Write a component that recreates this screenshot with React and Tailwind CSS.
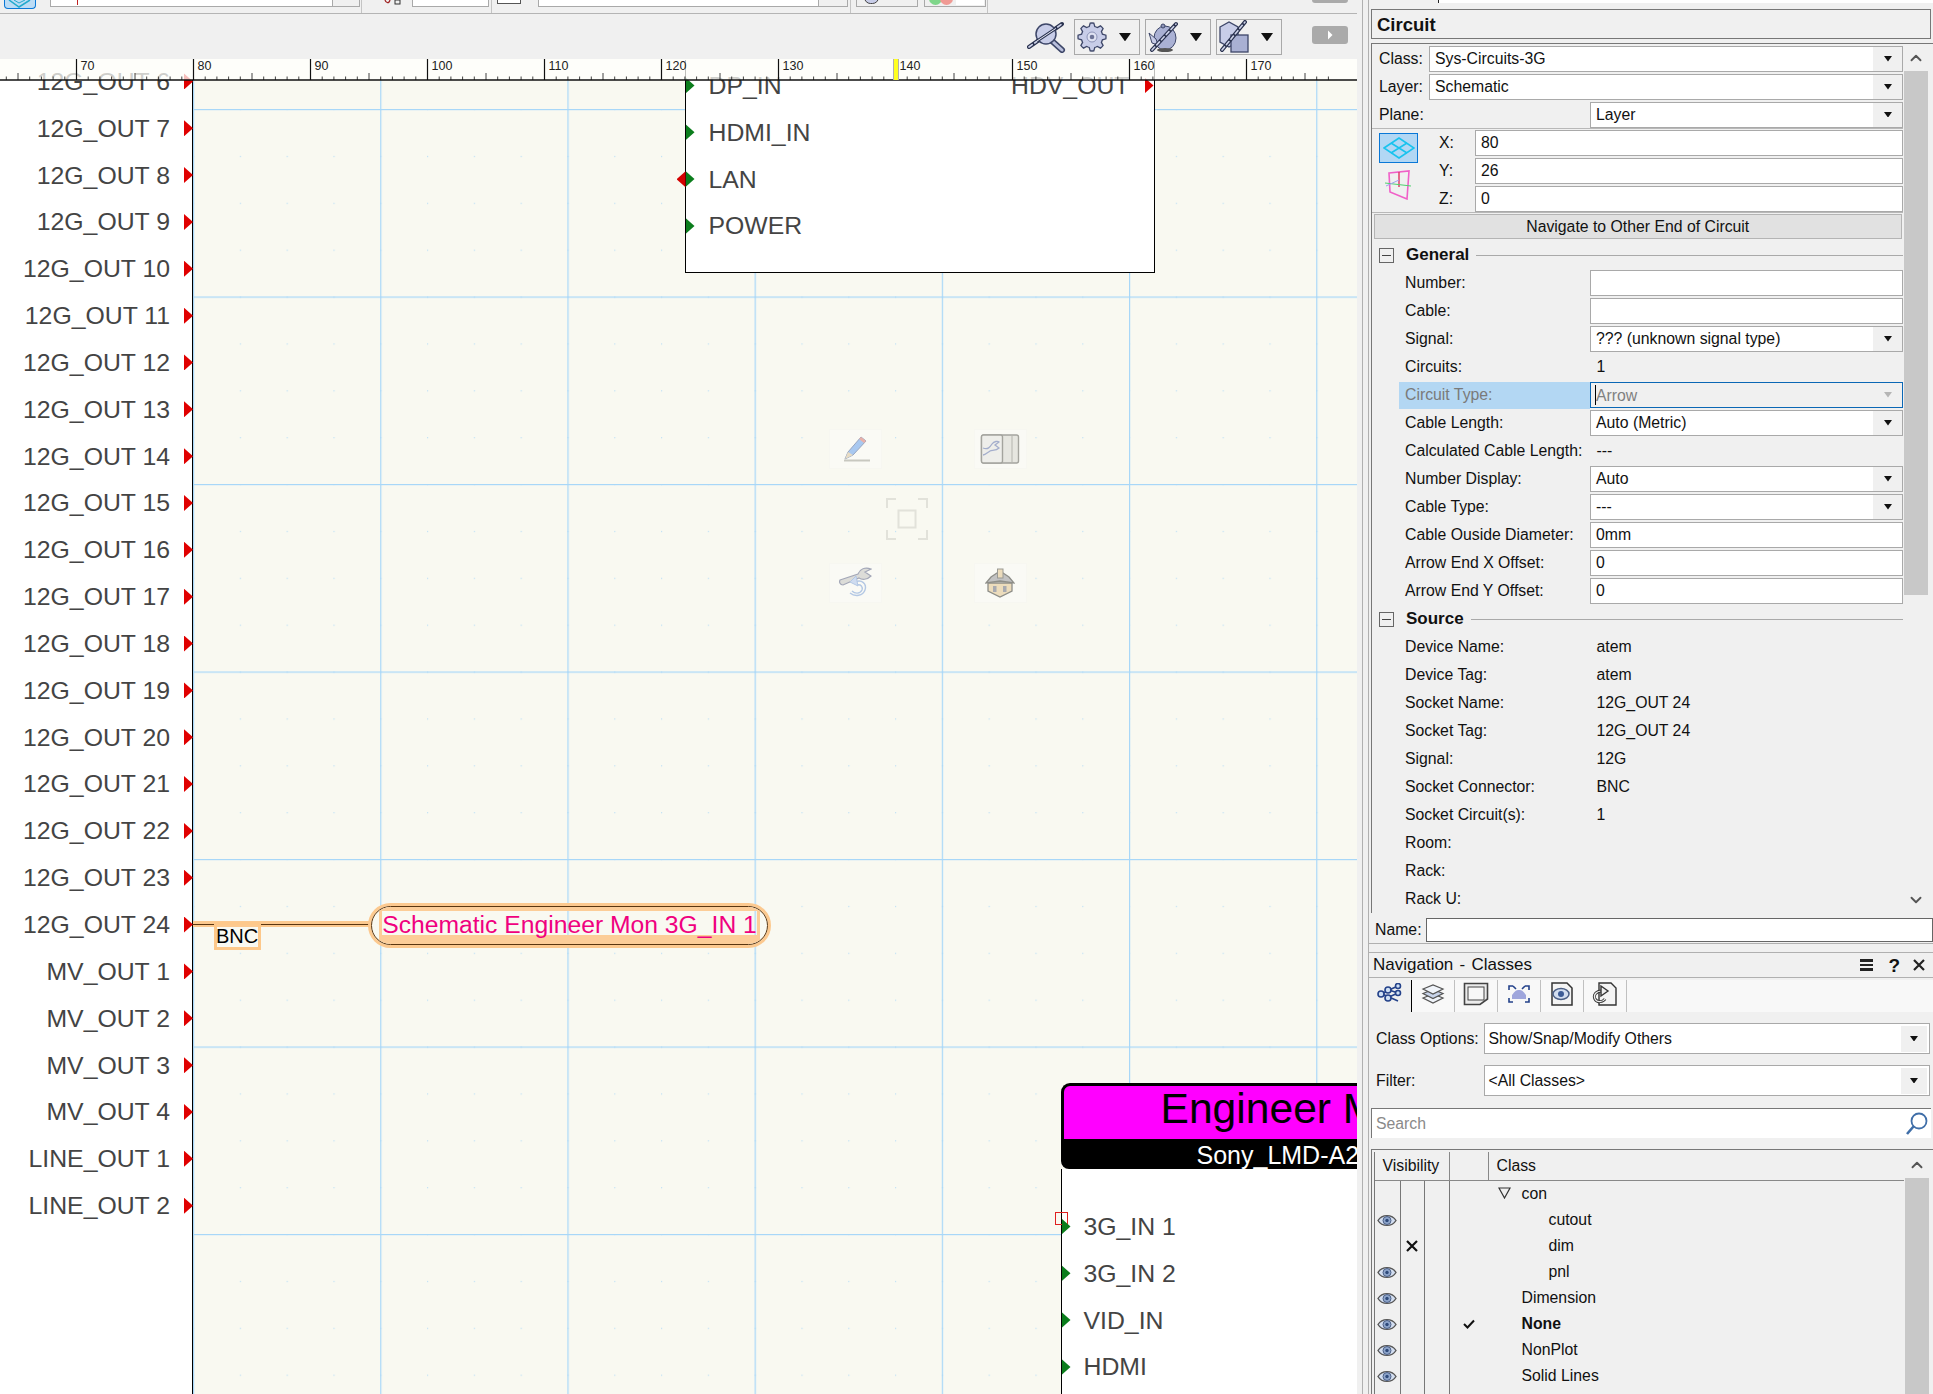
import React from 'react';
import { ChevronUp, ChevronDown } from 'lucide-react';

const OUTPUTS = [
  '12G_OUT 6', '12G_OUT 7', '12G_OUT 8', '12G_OUT 9', '12G_OUT 10', '12G_OUT 11', '12G_OUT 12',
  '12G_OUT 13', '12G_OUT 14', '12G_OUT 15', '12G_OUT 16', '12G_OUT 17', '12G_OUT 18', '12G_OUT 19',
  '12G_OUT 20', '12G_OUT 21', '12G_OUT 22', '12G_OUT 23', '12G_OUT 24', 'MV_OUT 1', 'MV_OUT 2',
  'MV_OUT 3', 'MV_OUT 4', 'LINE_OUT 1', 'LINE_OUT 2',
];

const SOURCE_ROWS = [
  ['Device Name:', 'atem'],
  ['Device Tag:', 'atem'],
  ['Socket Name:', '12G_OUT 24'],
  ['Socket Tag:', '12G_OUT 24'],
  ['Signal:', '12G'],
  ['Socket Connector:', 'BNC'],
  ['Socket Circuit(s):', '1'],
  ['Room:', ''],
  ['Rack:', ''],
  ['Rack U:', ''],
];

const CLASS_ROWS = [
  { name: 'con', indent: 'pl-[33px]', tree: true },
  { name: 'cutout', indent: 'pl-[60px]', eye: true },
  { name: 'dim', indent: 'pl-[60px]', cross: true },
  { name: 'pnl', indent: 'pl-[60px]', eye: true },
  { name: 'Dimension', indent: 'pl-[33px]', eye: true },
  { name: 'None', indent: 'pl-[33px]', eye: true, active: true },
  { name: 'NonPlot', indent: 'pl-[33px]', eye: true },
  { name: 'Solid Lines', indent: 'pl-[33px]', eye: true },
  { name: '', indent: 'pl-[33px]' },
];

// little triangles used as socket pins
const Pin = ({ color = 'bg-[#0b7d1c]' }) => (
  <div className={`h-[16px] w-[9px] shrink-0 [clip-path:polygon(0_0,100%_50%,0_100%)] ${color}`} />
);

const Caret = ({ color = '#111', size = 8 }) => (
  <svg width={size} height={size * 0.7} viewBox="0 0 10 7">
    <path d="M0 0H10L5 7Z" fill={color} />
  </svg>
);

const Select = ({ value, disabled = false }) => (
  <div
    className={`flex h-[26px] items-center border-[1.5px] ${
      disabled ? 'border-[#0a67b5] bg-[#f0f0f0] text-[#808080]' : 'border-[#a9a9a9] bg-white'
    }`}
  >
    {disabled && <div className="ml-[4px] h-[20px] w-px bg-black" />}
    <div className={`flex-1 ${disabled ? 'pt-[2px]' : 'pl-[5px]'}`}>{value}</div>
    <div className={`flex h-full w-[29px] items-center justify-center ${disabled ? '' : 'bg-[#f0f0f0]'}`}>
      <Caret color={disabled ? '#b5b5b5' : '#111'} />
    </div>
  </div>
);

const Input = ({ value = '' }) => (
  <div className="flex h-[26px] items-center border-[1.5px] border-[#a9a9a9] bg-white pl-[5px]">{value}</div>
);

const Row = ({ label, highlight = false, children }) => (
  <div className="flex h-[28px] items-center">
    <div
      className={`ml-[27px] flex h-[27px] w-[191px] shrink-0 items-center pl-[6px] ${
        highlight ? 'bg-[#b3d7f3] text-[#7a7a7a]' : ''
      }`}
    >
      {label}
    </div>
    <div className="w-[313px]">{children}</div>
  </div>
);

const Static = ({ value }) => <div className="pl-[6.5px]">{value}</div>;

const SectionHeader = ({ title }) => (
  <div className="flex h-[28px] items-center pl-[7px]">
    <div className="relative h-[15px] w-[15px] border border-[#666]">
      <div className="absolute left-[2px] right-[2px] top-[6px] h-px bg-[#444]" />
    </div>
    <div className="ml-[12px] text-[17px] font-bold">{title}</div>
    <div className="ml-[7px] h-px flex-1 bg-[#a9a9a9]" />
  </div>
);

const Eye = () => (
  <svg width="20" height="15" viewBox="0 0 20 15">
    <path d="M1 7.5C5 1 15 1 19 7.5C15 14 5 14 1 7.5Z" fill="#d3def0" stroke="#555" strokeWidth="1.4" />
    <circle cx="10" cy="7.5" r="4" fill="#8fa6cc" stroke="#4b5f85" />
    <circle cx="10" cy="7.5" r="1.7" fill="#2f4a7a" />
  </svg>
);

const Gear = () => {
  const pts = [];
  for (let i = 0; i < 48; i++) {
    const step = i % 6;
    const r = step < 3 ? 14 : 10.8;
    const a = ((i - 1) / 48) * Math.PI * 2;
    pts.push(`${(15 + r * Math.cos(a)).toFixed(1)},${(15 + r * Math.sin(a)).toFixed(1)}`);
  }
  return (
    <svg width="30" height="30" viewBox="0 0 30 30">
      <polygon points={pts.join(' ')} fill="#c8cde8" stroke="#3d4668" strokeWidth="1.3" />
      <circle cx="15" cy="15" r="5" fill="#dfe2f2" stroke="#8d94b8" />
      <circle cx="15" cy="15" r="2.3" fill="#6d7497" />
    </svg>
  );
};

const Chain = ({ d }) => (
  <g>
    <path d={d} stroke="#2b3350" strokeWidth="4" strokeLinecap="round" fill="none" />
    <path d={d} stroke="#cfd4ea" strokeWidth="1.6" strokeLinecap="round" strokeDasharray="4 3" fill="none" />
  </g>
);

const Magnifier = () => (
  <svg width="39" height="32" viewBox="0 0 39 32">
    <Chain d="M2 26L35 3" />
    <path d="M25 20L35 29" stroke="#3d4668" strokeWidth="6" strokeLinecap="round" />
    <path d="M25 20L35 29" stroke="#b9bfdc" strokeWidth="3" strokeLinecap="round" />
    <circle cx="19" cy="13" r="10" fill="#c8cde8" stroke="#3d4668" strokeWidth="1.5" />
    <path d="M10 20L28 8" stroke="#2b3350" strokeWidth="3" />
    <path d="M10 20L28 8" stroke="#e8eaf5" strokeWidth="1" />
  </svg>
);

const Teapot = () => (
  <svg width="30" height="32" viewBox="0 0 30 32">
    <ellipse cx="17" cy="17" rx="11" ry="12" fill="#aab1d4" stroke="#3d4668" />
    <path d="M8 18L1 12L4 22L10 24Z" fill="#c8cde8" stroke="#3d4668" />
    <circle cx="15" cy="5" r="2" fill="#8d94b8" stroke="#3d4668" />
    <ellipse cx="17" cy="29" rx="8" ry="2" fill="#555" />
    <Chain d="M4 29L28 3" />
  </svg>
);

const HexSquare = () => (
  <svg width="32" height="34" viewBox="0 0 32 34">
    <path d="M2 7L11 2L20 7V22L11 27L2 22Z" fill="#c8cde8" stroke="#3d4668" strokeWidth="1.3" />
    <rect x="13" y="15" width="17" height="17" fill="#a9b0d3" stroke="#3d4668" strokeWidth="1.3" />
    <Chain d="M4 30L27 2" />
  </svg>
);

const ToolMenu = ({ children }) => (
  <div className="ml-[5px] flex h-[36px] w-[66px] items-center border-[1.5px] border-[#a9a9a9] pl-[1px]">
    <div className="flex w-[32px] justify-center">{children}</div>
    <div className="ml-[11px] flex">
      <Caret size={12} />
    </div>
  </div>
);

const TopBar = () => (
  <div className="relative z-30 bg-[#f0f0f0]">
    {/* first toolbar, only the bottom edge is on screen */}
    <div className="relative flex h-[14px] items-start border-b-[1.5px] border-[#b4b4b4] pl-[4px]">
      <div className="h-[9px] w-[32px] rounded-b-sm border-[1.5px] border-t-0 border-[#0a78d7] bg-[#bcdcf5]">
        <svg width="29" height="8" viewBox="0 0 29 8">
          <path d="M4 0L14 7L25 0" fill="none" stroke="#22aacc" strokeWidth="1.5" />
          <path d="M9 0L14 3L20 0" fill="none" stroke="#22aacc" />
        </svg>
      </div>
      <div className="relative ml-[14px] h-[7px] w-[283px] border border-t-0 border-[#a9a9a9] bg-white">
        <div className="absolute left-[26px] top-0 h-[5px] w-px bg-[#c02020]" />
      </div>
      <div className="h-[7px] w-[27px] border-b border-r border-[#a9a9a9]" />
      <div className="ml-[1px] h-[13px] w-px bg-[#c4c4c4]" />
      <svg className="ml-[22px]" width="18" height="5" viewBox="0 0 18 5">
        <path d="M1 0C2 3 5 4 6 0" fill="none" stroke="#a02525" strokeWidth="1.3" />
        <rect x="11" y="0" width="5" height="4" fill="none" stroke="#333" />
      </svg>
      <div className="ml-[10px] h-[7px] w-[77px] border border-t-0 border-[#a9a9a9] bg-white" />
      <div className="ml-[2px] h-[13px] w-px bg-[#c4c4c4]" />
      <div className="ml-[5px] h-[4px] w-[24px] border-x border-b border-[#555] bg-white" />
      <div className="ml-[17px] h-[7px] w-[281px] border border-t-0 border-[#a9a9a9] bg-white" />
      <div className="h-[7px] w-[29px] border-b border-r border-[#a9a9a9]" />
      <div className="ml-[2px] h-[13px] w-px bg-[#c4c4c4]" />
      <div className="relative ml-[5px] h-[7px] w-[62px] overflow-hidden border-x border-b border-[#a9a9a9]">
        <div className="absolute -top-[9px] left-[7px] h-[13px] w-[15px] rounded-full border border-[#444] bg-[#c8cde8]" />
      </div>
      <div className="relative ml-[6px] h-[7px] w-[62px] overflow-hidden border-x border-b border-[#a9a9a9]">
        <div className="absolute -top-[8px] left-[4px] h-[13px] w-[13px] rounded-full bg-[#7fd68a]" />
        <div className="absolute -top-[8px] left-[15px] h-[13px] w-[13px] rounded-full bg-[#f09a94]" />
        <div className="absolute left-[31px] top-0 h-[5px] w-[28px] bg-white" />
      </div>
      <div className="ml-[1px] h-[13px] w-px bg-[#c4c4c4]" />
      <div className="absolute left-[1312px] top-0 h-[3px] w-[36px] rounded-b bg-[#aaaaaa]" />
    </div>
    {/* second toolbar */}
    <div className="flex h-[45px] items-start justify-end pr-[9px] pt-[5px]">
      <div className="mr-[3px] mt-[2px]">
        <Magnifier />
      </div>
      <ToolMenu><Gear /></ToolMenu>
      <ToolMenu><Teapot /></ToolMenu>
      <ToolMenu><HexSquare /></ToolMenu>
      <div className="ml-[30px] mt-[7px] flex h-[18px] w-[36px] items-center justify-center rounded-[3px] bg-[#aaaaaa]">
        <div className="h-[10px] w-[5px] bg-white [clip-path:polygon(0_0,100%_50%,0_100%)]" />
      </div>
    </div>
  </div>
);

const Ruler = () => {
  const step = 11.7;
  const ticks = Array.from({ length: 118 }, (_, i) => i);
  const labels = [70, 80, 90, 100, 110, 120, 130, 140, 150, 160, 170];
  return (
    <div className="relative z-20 h-[21px] bg-[#fdfdf8]/75">
      <svg className="absolute inset-0" width="1357" height="22">
        {ticks.map((i) => {
          const x = 0 + 76.5 - 117 + i * step;
          const h = i % 10 === 0 ? 21 : i % 5 === 0 ? 7 : 3.5;
          return <line key={i} x1={x} x2={x} y1={21 - h} y2={21} stroke="#111" strokeWidth={i % 10 === 0 ? 1.2 : 0.8} />;
        })}
        <line x1="0" x2="1357" y1="21" y2="21" stroke="#111" strokeWidth="1.6" />
      </svg>
      {labels.map((n, i) => (
        <div
          key={n}
          className="absolute top-[0px] text-[12.5px] leading-[15px] text-[#222]"
          style={{ left: 80.5 + i * 117 }}
        >
          {n}
        </div>
      ))}
      <div className="absolute left-[892.5px] top-0 h-[21px] w-[6.5px] border-x border-[#b0b0b0] bg-[#ffff20]" />
    </div>
  );
};

const GridLayer = () => (
  <svg className="absolute inset-0" width="1164" height="1320">
    <defs>
      <pattern id="dots" x="0" y="29" width="46.8" height="46.875" patternUnits="userSpaceOnUse">
        <rect x="0" y="0" width="1.2" height="1.2" fill="#bfe0f5" />
      </pattern>
      <pattern id="lines" x="0" y="29" width="187.2" height="187.5" patternUnits="userSpaceOnUse">
        <rect x="0" y="0" width="187.2" height="1.2" fill="#a8d7f8" />
        <rect x="0" y="0" width="1.2" height="187.5" fill="#a8d7f8" />
      </pattern>
    </defs>
    <rect width="1164" height="1320" fill="url(#dots)" />
    <rect width="1164" height="1320" fill="url(#lines)" />
  </svg>
);

const IconBox = ({ className, children }) => (
  <div className={`absolute flex h-[40px] w-[53px] items-center justify-center border border-[#f7f7f1] bg-[#fafaf5] ${className}`}>
    {children}
  </div>
);

const PaletteIcons = () => (
  <>
    <IconBox className="left-[636px] top-[349px]">
      <svg width="30" height="30" viewBox="0 0 30 30">
        <path d="M5 25L8 18L21 3L26 7L13 21Z" fill="#a8c8f0" stroke="#98a6c0" />
        <path d="M21 3L26 7L24 9L19 5Z" fill="#e8b0a8" />
        <path d="M5 25L8 18L13 21Z" fill="#e8dcc4" />
        <path d="M4 26.5H30" stroke="#c8c8c0" strokeWidth="2" />
      </svg>
    </IconBox>
    <IconBox className="left-[781px] top-[349px]">
      <svg width="40" height="30" viewBox="0 0 40 30">
        <rect x="1.5" y="1" width="37" height="28" rx="2" fill="#e6e6e0" stroke="#a4a49e" strokeWidth="1.4" />
        <rect x="1.5" y="1" width="21" height="28" rx="2" fill="#eeeeea" stroke="#a4a49e" strokeWidth="1.4" />
        <path d="M32 1V29" stroke="#b4b4ae" />
        <path d="M3 14C8 16 10 13 12 10C14 7 18 7 19 8L15 11L19 14C16 17 12 16 10 17C7 19 5 21 3 21" fill="none" stroke="#a4aecc" strokeWidth="1.3" />
      </svg>
    </IconBox>
    <IconBox className="left-[636px] top-[483px]">
      <svg width="34" height="32" viewBox="0 0 34 32">
        <path d="M2 13L20 7C22 2 27 0 33 2L27 5L33 9C29 13 24 13 21 11L5 18C2 18 1 15 2 13Z" fill="#dcdcd8" stroke="#a4a8b8" strokeWidth="1.2" />
        <path d="M17 15C24 12 29 17 27 23C25 29 17 30 12 26" fill="none" stroke="#b4c8e4" strokeWidth="1.4" />
        <path d="M19 18C23 17 25 20 24 23C22 27 17 27 14 24" fill="none" stroke="#b4c8e4" strokeWidth="1.4" />
        <path d="M18 9L12 15L20 19Z" fill="#cfdcf0" stroke="#b4c8e4" />
      </svg>
    </IconBox>
    <IconBox className="left-[781px] top-[483px]">
      <svg width="30" height="30" viewBox="0 0 30 30">
        <path d="M3 15V23L15 29L27 23V15Z" fill="#ecdcbc" stroke="#8e8e88" strokeWidth="1.3" />
        <path d="M1 15L6 9L15 3L24 9L29 15L15 13Z" fill="#c2c2c2" stroke="#8e8e88" strokeWidth="1.3" />
        <rect x="12.5" y="1" width="5.5" height="9" fill="#ecdcbc" stroke="#9a9a94" />
        <rect x="8" y="18" width="3.5" height="6" fill="#a8aab0" />
        <rect x="18" y="18" width="3.5" height="6" fill="#a8aab0" />
      </svg>
    </IconBox>
    <svg className="absolute left-[693px] top-[418px]" width="42" height="42" viewBox="0 0 42 42" fill="none" stroke="#e2e2da" strokeWidth="2">
      <path d="M1 10V1H10M32 1H41V10M41 32V41H32M10 41H1V32" />
      <rect x="12.5" y="12.5" width="17" height="17" />
    </svg>
  </>
);

const CableSelection = () => (
  <>
    <div className="absolute left-0 top-[841px] flex h-[6px] w-[177px] items-center bg-[#fcc98f]">
      <div className="h-px w-full bg-[#5a3610]" />
    </div>
    <div className="absolute left-[21px] top-[842px] flex h-[28px] w-[47px] items-center justify-center border-[3.5px] border-[#fdc88a] text-[20px] leading-none text-black">
      BNC
    </div>
    <div className="absolute left-[175.5px] top-[823px] h-[45px] w-[403px] rounded-full border-[3px] border-[#fcc98f]">
      <div className="flex h-full w-full justify-center overflow-hidden rounded-full border border-[#5a3610]">
        <div className="h-full whitespace-nowrap border-x-[3px] border-b-[9px] border-t-[4px] border-[#fccd98] text-[24.7px] leading-[27px] text-[#f0007f]">
          Schematic Engineer Mon 3G_IN 1
        </div>
      </div>
    </div>
  </>
);

const InputPort = ({ label, right, gap = 'ml-[14px]' }) => (
  <div className="relative flex h-[46.85px] items-center text-[24.8px] text-[#444]">
    <Pin />
    <div className={gap}>{label}</div>
    {right}
  </div>
);

const TopDevice = () => (
  <div className="absolute left-[492px] top-[-20px] h-[213px] w-[470px] border-x-[1.5px] border-b-[1.5px] border-black bg-white pt-[2px]">
    <InputPort
      label="DP_IN"
      right={
        <div className="ml-auto flex items-center">
          <div className="mr-[15px]">HDV_OUT</div>
          <Pin color="bg-[#e00000]" />
        </div>
      }
    />
    <InputPort label="HDMI_IN" />
    <InputPort
      label={
        <>
          <div className="absolute left-[-9px] top-[15.5px] h-[16px] w-[9px] bg-[#d40000] [clip-path:polygon(100%_0,0_50%,100%_100%)]" />
          LAN
        </>
      }
    />
    <InputPort label="POWER" />
  </div>
);

const EngineerDevice = () => (
  <div className="absolute left-[868px] top-[1003px] w-[600px]">
    <div className="h-[56px] overflow-hidden rounded-tl-[9px] border-l-[3px] border-t-[3px] border-black bg-[#ff00ff] pl-[97px] text-[42.6px] leading-[44px] text-black">
      Engineer Mon
    </div>
    <div className="h-[30px] rounded-bl-[8px] bg-black pl-[136px] text-[25px] leading-[32px] text-white">
      Sony_LMD-A240
    </div>
    <div className="relative border-l-[1.5px] border-black bg-white pb-[10px] pt-[34px]">
      <div className="absolute left-[-7px] top-[43px] h-[13px] w-[13px] border border-[#e02020]" />
      <InputPort label="3G_IN 1" gap="ml-[13px]" />
      <InputPort label="3G_IN 2" gap="ml-[13px]" />
      <InputPort label="VID_IN" gap="ml-[13px]" />
      <InputPort label="HDMI" gap="ml-[13px]" />
    </div>
  </div>
);

const Schematic = () => (
  <div className="relative flex-1 border-l-[1.5px] border-black bg-[#f9f9f1]">
    <GridLayer />
    <PaletteIcons />
    <CableSelection />
    <TopDevice />
    <EngineerDevice />
  </div>
);

const SocketList = () => (
  <div className="relative z-10 -mt-[22px] w-[191.5px] shrink-0">
    {OUTPUTS.map((name) => (
      <div key={name} className="flex h-[46.85px] items-center justify-end text-[24.8px] text-[#444]">
        <div className="mr-[14px] whitespace-nowrap">{name}</div>
        <div className="-mr-[1.5px]">
          <Pin color="bg-[#e00000]" />
        </div>
      </div>
    ))}
  </div>
);

const DrawingArea = () => (
  <div className="h-[1394px] w-[1357px] shrink-0 overflow-hidden bg-white">
    <TopBar />
    <Ruler />
    <div className="flex h-[1314px]">
      <SocketList />
      <Schematic />
    </div>
  </div>
);

const FormScrollbar = () => (
  <div className="ml-[1px] flex w-[24px] shrink-0 flex-col">
    <div className="flex h-[26px] shrink-0 items-center justify-center">
      <ChevronUp size={18} strokeWidth={2.5} className="text-[#555]" />
    </div>
    <div className="h-[524px] w-full shrink-0 bg-[#c8c8c8]" />
    <div className="mt-auto flex h-[26px] shrink-0 items-center justify-center">
      <ChevronDown size={18} strokeWidth={2.5} className="text-[#555]" />
    </div>
  </div>
);

const CircuitForm = () => (
  <div className="flex h-[870px] overflow-hidden border-l-[1.5px] border-t-[1.5px] border-[#777] pt-px">
    <div className="w-[531px] shrink-0">
      <div className="flex h-[28px] items-center pl-[7px]">
        <div className="w-[50px]">Class:</div>
        <div className="flex-1"><Select value="Sys-Circuits-3G" /></div>
      </div>
      <div className="flex h-[28px] items-center pl-[7px]">
        <div className="w-[50px]">Layer:</div>
        <div className="flex-1"><Select value="Schematic" /></div>
      </div>
      <div className="flex h-[28px] items-center border-b border-[#b8b8b8] pl-[7px]">
        <div className="w-[211px]">Plane:</div>
        <div className="flex-1"><Select value="Layer" /></div>
      </div>
      <div className="flex h-[84px] border-b border-[#b8b8b8]">
        <div className="w-[67px] pl-[7px] pt-[4px]">
          <div className="flex h-[30px] w-[39px] items-center justify-center border border-[#0a78d7] bg-[#b2d7f4]">
            <svg width="32" height="24" viewBox="0 0 32 24" fill="none" stroke="#19c3ee" strokeWidth="1.6">
              <path d="M1 12L16 2L31 12L16 22Z" />
              <path d="M8 7L24 17M24 7L8 17" />
            </svg>
          </div>
          <svg className="ml-[6px] mt-[7px]" width="27" height="30" viewBox="0 0 27 30" fill="none">
            <path d="M4 3L24 1L22 29L5 22Z" stroke="#f060c8" strokeWidth="1.6" />
            <path d="M14 2V17" stroke="#e03060" strokeWidth="1.4" />
            <path d="M0 13L26 16" stroke="#50d070" />
            <path d="M1 16L14 10" stroke="#a0a0f0" />
          </svg>
        </div>
        <div className="flex-1">
          {[['X:', '80'], ['Y:', '26'], ['Z:', '0']].map(([axis, value]) => (
            <div key={axis} className="flex h-[28px] items-center">
              <div className="w-[36px]">{axis}</div>
              <div className="flex-1"><Input value={value} /></div>
            </div>
          ))}
        </div>
      </div>
      <div className="h-[28px] pl-[1.5px] pr-[1px] pt-[1px]">
        <div className="flex h-[25px] items-center justify-center border-[1.5px] border-[#b4b4b4] bg-[#e1e1e1]">
          Navigate to Other End of Circuit
        </div>
      </div>
      <SectionHeader title="General" />
      <Row label="Number:"><Input /></Row>
      <Row label="Cable:"><Input /></Row>
      <Row label="Signal:"><Select value="??? (unknown signal type)" /></Row>
      <Row label="Circuits:"><Static value="1" /></Row>
      <Row label="Circuit Type:" highlight><Select value="Arrow" disabled /></Row>
      <Row label="Cable Length:"><Select value="Auto (Metric)" /></Row>
      <Row label="Calculated Cable Length:"><Static value="---" /></Row>
      <Row label="Number Display:"><Select value="Auto" /></Row>
      <Row label="Cable Type:"><Select value="---" /></Row>
      <Row label="Cable Ouside Diameter:"><Input value="0mm" /></Row>
      <Row label="Arrow End X Offset:"><Input value="0" /></Row>
      <Row label="Arrow End Y Offset:"><Input value="0" /></Row>
      <SectionHeader title="Source" />
      {SOURCE_ROWS.map(([label, value]) => (
        <Row key={label} label={label}><Static value={value} /></Row>
      ))}
    </div>
    <FormScrollbar />
  </div>
);

const TabIcon = ({ children }) => (
  <div className="flex h-[32px] w-[43px] items-center justify-center border-r border-[#c0c0c0] pb-[4px]">{children}</div>
);

const NavTabs = () => (
  <div className="mt-[2px] flex h-[32px] bg-[#f8f8f8]">
    <div className="flex h-[32px] w-[43px] items-center justify-center border-r-[1.5px] border-black bg-[#f0f0f0] pb-[4px]">
      <svg width="26" height="22" viewBox="0 0 26 22" fill="#cfe0f5" stroke="#24428a" strokeWidth="1.6">
        <path d="M5 11L12 7L21 3M5 11L12 14L21 18M12 7L21 10M12 14L21 10" fill="none" />
        <circle cx="4" cy="11" r="3" />
        <circle cx="11" cy="7" r="3" />
        <circle cx="11" cy="15" r="3" />
        <circle cx="21" cy="3" r="2.5" />
        <circle cx="21" cy="10" r="2.5" />
      </svg>
    </div>
    <TabIcon>
      <svg width="24" height="22" viewBox="0 0 24 22" fill="#f0f4fa" stroke="#555" strokeWidth="1.2">
        <path d="M2 15L12 11L22 15L12 20Z" />
        <path d="M2 10.5L12 6.5L22 10.5L12 15.5Z" fill="#c8d4ea" />
        <path d="M2 6L12 2L22 6L12 11Z" />
      </svg>
    </TabIcon>
    <TabIcon>
      <svg width="26" height="24" viewBox="0 0 26 24" fill="none" stroke="#444">
        <path d="M1.5 1.5H24.5V17L17 22.5H1.5Z" fill="#ececec" strokeWidth="1.6" />
        <rect x="5" y="5" width="16" height="13" fill="#f8f8f8" />
      </svg>
    </TabIcon>
    <TabIcon>
      <svg width="24" height="24" viewBox="0 0 24 24" fill="none" stroke="#24428a" strokeWidth="1.6">
        <path d="M5 13C8 9 9 8 12 8C15 8 16 9 19 13V17H5Z" fill="#9fa6dc" stroke="none" />
        <path d="M6 4H2V8M18 4H22V8M6 20H2V16M18 20H22V16" />
        <path d="M6 4L9 7M18 4L15 7" />
      </svg>
    </TabIcon>
    <TabIcon>
      <svg width="24" height="24" viewBox="0 0 24 24" fill="none" stroke="#333" strokeWidth="1.5">
        <path d="M2 1H17L22 6V23H2Z" fill="#f4f4f4" />
        <ellipse cx="11" cy="12" rx="8" ry="5.5" fill="#d3def0" stroke="#4b5f85" />
        <circle cx="11" cy="12" r="3" fill="#3d5c96" stroke="none" />
      </svg>
    </TabIcon>
    <TabIcon>
      <svg width="26" height="24" viewBox="0 0 26 24" fill="none" stroke="#333" strokeWidth="1.4">
        <path d="M7 1H19L24 6V23H7Z" fill="#f4f4f4" />
        <path d="M10 9C4 9 1 13 3 17C5 21 11 20 13 17" stroke="#333" strokeWidth="3" />
        <path d="M10 9C4 9 1 13 3 17C5 21 11 20 13 17" stroke="#eee" strokeWidth="1.2" />
        <path d="M9 4L16 9L9 14Z" fill="#eee" />
      </svg>
    </TabIcon>
  </div>
);

const ClassTable = () => (
  <div className="mt-[11px] flex h-[270px] border-l-[1.5px] border-t-[1.5px] border-[#777] pl-[1.5px] pt-[2px]">
    <div className="w-[530px] shrink-0 border-l border-[#777]">
      <div className="flex h-[29px] items-center border-b-[1.5px] border-[#888] bg-[#f0f0f0]">
        <div className="flex h-full w-[75px] items-center border-r border-[#888] pl-[8px]">Visibility</div>
        <div className="h-full w-[39px] border-r border-[#888]" />
        <div className="pl-[8px]">Class</div>
      </div>
      {CLASS_ROWS.map((row) => (
        <div key={row.name} className="flex h-[26px]">
          <div className="flex h-full w-[26px] items-center justify-center border-r border-[#777]">
            {row.eye && <Eye />}
          </div>
          <div className="flex h-full w-[24px] items-center justify-center border-r border-[#777]">
            {row.cross && (
              <svg width="12" height="12" viewBox="0 0 12 12">
                <path d="M1 1L11 11M11 1L1 11" stroke="#111" strokeWidth="2.2" />
              </svg>
            )}
          </div>
          <div className="h-full w-[25px] border-r border-[#777]" />
          <div className="flex h-full w-[39px] items-center justify-center">
            {row.active && (
              <svg width="12" height="10" viewBox="0 0 12 10">
                <path d="M1 5L4.5 8.5L11 1.5" fill="none" stroke="#111" strokeWidth="2" />
              </svg>
            )}
          </div>
          <div className={`relative flex items-center ${row.indent} ${row.active ? 'font-bold' : ''}`}>
            {row.tree && (
              <svg className="absolute left-[9px] top-[6px]" width="13" height="12" viewBox="0 0 13 12">
                <path d="M1 1H12L6.5 11Z" fill="none" stroke="#333" strokeWidth="1.2" />
              </svg>
            )}
            {row.name}
          </div>
        </div>
      ))}
    </div>
    <div className="ml-[1px] w-[24px] shrink-0">
      <div className="flex h-[26px] items-center justify-center">
        <ChevronUp size={18} strokeWidth={2.5} className="text-[#555]" />
      </div>
      <div className="h-[240px] bg-[#c8c8c8]" />
    </div>
  </div>
);

const NavigationPanel = () => (
  <div className="mt-[8px]">
    <div className="flex h-[26px] items-center border-y-[1.5px] border-[#b0b0b0] pl-[4px] text-[17px] [word-spacing:1.5px]">
      <div>Navigation - Classes</div>
      <div className="ml-auto flex items-center">
        <div className="flex w-[13px] flex-col gap-[2px]">
          <div className="h-[2.5px] bg-[#222]" />
          <div className="h-[2.5px] bg-[#222]" />
          <div className="h-[2.5px] bg-[#222]" />
        </div>
        <div className="ml-[15px] text-[19px] font-bold leading-none">?</div>
        <svg className="ml-[13px] mr-[8px]" width="12" height="12" viewBox="0 0 12 12">
          <path d="M1 1L11 11M11 1L1 11" stroke="#222" strokeWidth="2.2" />
        </svg>
      </div>
    </div>
    <NavTabs />
    <div className="mt-[11px] flex h-[31px] items-center pl-[7px] pr-[3px]">
      <div className="w-[107.5px]">Class Options:</div>
      <div className="flex h-[31px] flex-1 items-center border-[1.5px] border-[#a9a9a9] bg-white pl-[4px]">
        Show/Snap/Modify Others
        <div className="ml-auto mr-[2px] flex h-[26px] w-[26px] items-center justify-center bg-[#f0f0f0]"><Caret /></div>
      </div>
    </div>
    <div className="mt-[11px] flex h-[31px] items-center pl-[7px] pr-[3px]">
      <div className="w-[107.5px]">Filter:</div>
      <div className="flex h-[31px] flex-1 items-center border-[1.5px] border-[#a9a9a9] bg-white pl-[4px]">
        {'<All Classes>'}
        <div className="ml-auto mr-[2px] flex h-[26px] w-[26px] items-center justify-center bg-[#f0f0f0]"><Caret /></div>
      </div>
    </div>
    <div className="ml-[2px] mr-[2px] mt-[12px] flex h-[30px] items-center border-l-[1.5px] border-t-[1.5px] border-[#777] bg-white pl-[4px] text-[#8a8a8a]">
      Search
      <svg className="ml-auto mr-[3px]" width="23" height="24" viewBox="0 0 23 24" fill="none" stroke="#3f6ea8" strokeWidth="1.8">
        <circle cx="14" cy="9" r="7.5" />
        <path d="M8.5 14.5L2 22" strokeWidth="2.6" />
      </svg>
    </div>
  </div>
);

const SidePanel = () => (
  <div className="h-[1394px] flex-1 overflow-hidden bg-[#f0f0f0] pl-[5px] text-[15.8px] text-[#111]">
    <div className="h-full border-l border-[#b0b0b0] pl-[5px]">
      <div className="border-l border-[#b0b0b0]">
        <div className="relative h-[9px]">
          <div className="absolute left-[70px] right-0 top-0 h-[3px] bg-white" />
          <div className="absolute left-[69px] top-0 h-[3px] w-px bg-[#222]" />
        </div>
        <div className="ml-[2px] mr-[2px] flex h-[30px] items-center border-[1.5px] border-[#777] pl-[5px] pt-[2px] text-[18.5px] font-bold">
          Circuit
        </div>
        <div className="ml-[2px] mt-[4px]">
          <CircuitForm />
        </div>
        <div className="flex h-[31px] items-start border-b-[1.5px] border-[#b0b0b0] pl-[6px] pt-[5px]">
          <div className="w-[51px] leading-[24px]">Name:</div>
          <div className="h-[24px] flex-1 border-[1.5px] border-[#666] bg-white" />
        </div>
        <NavigationPanel />
        <div className="ml-[2px]">
          <ClassTable />
        </div>
      </div>
    </div>
  </div>
);

export default function App() {
  return (
    <div className="flex h-[1394px] w-[1933px] overflow-hidden bg-white font-['Liberation_Sans',Arial,sans-serif]">
      <DrawingArea />
      <SidePanel />
    </div>
  );
}
